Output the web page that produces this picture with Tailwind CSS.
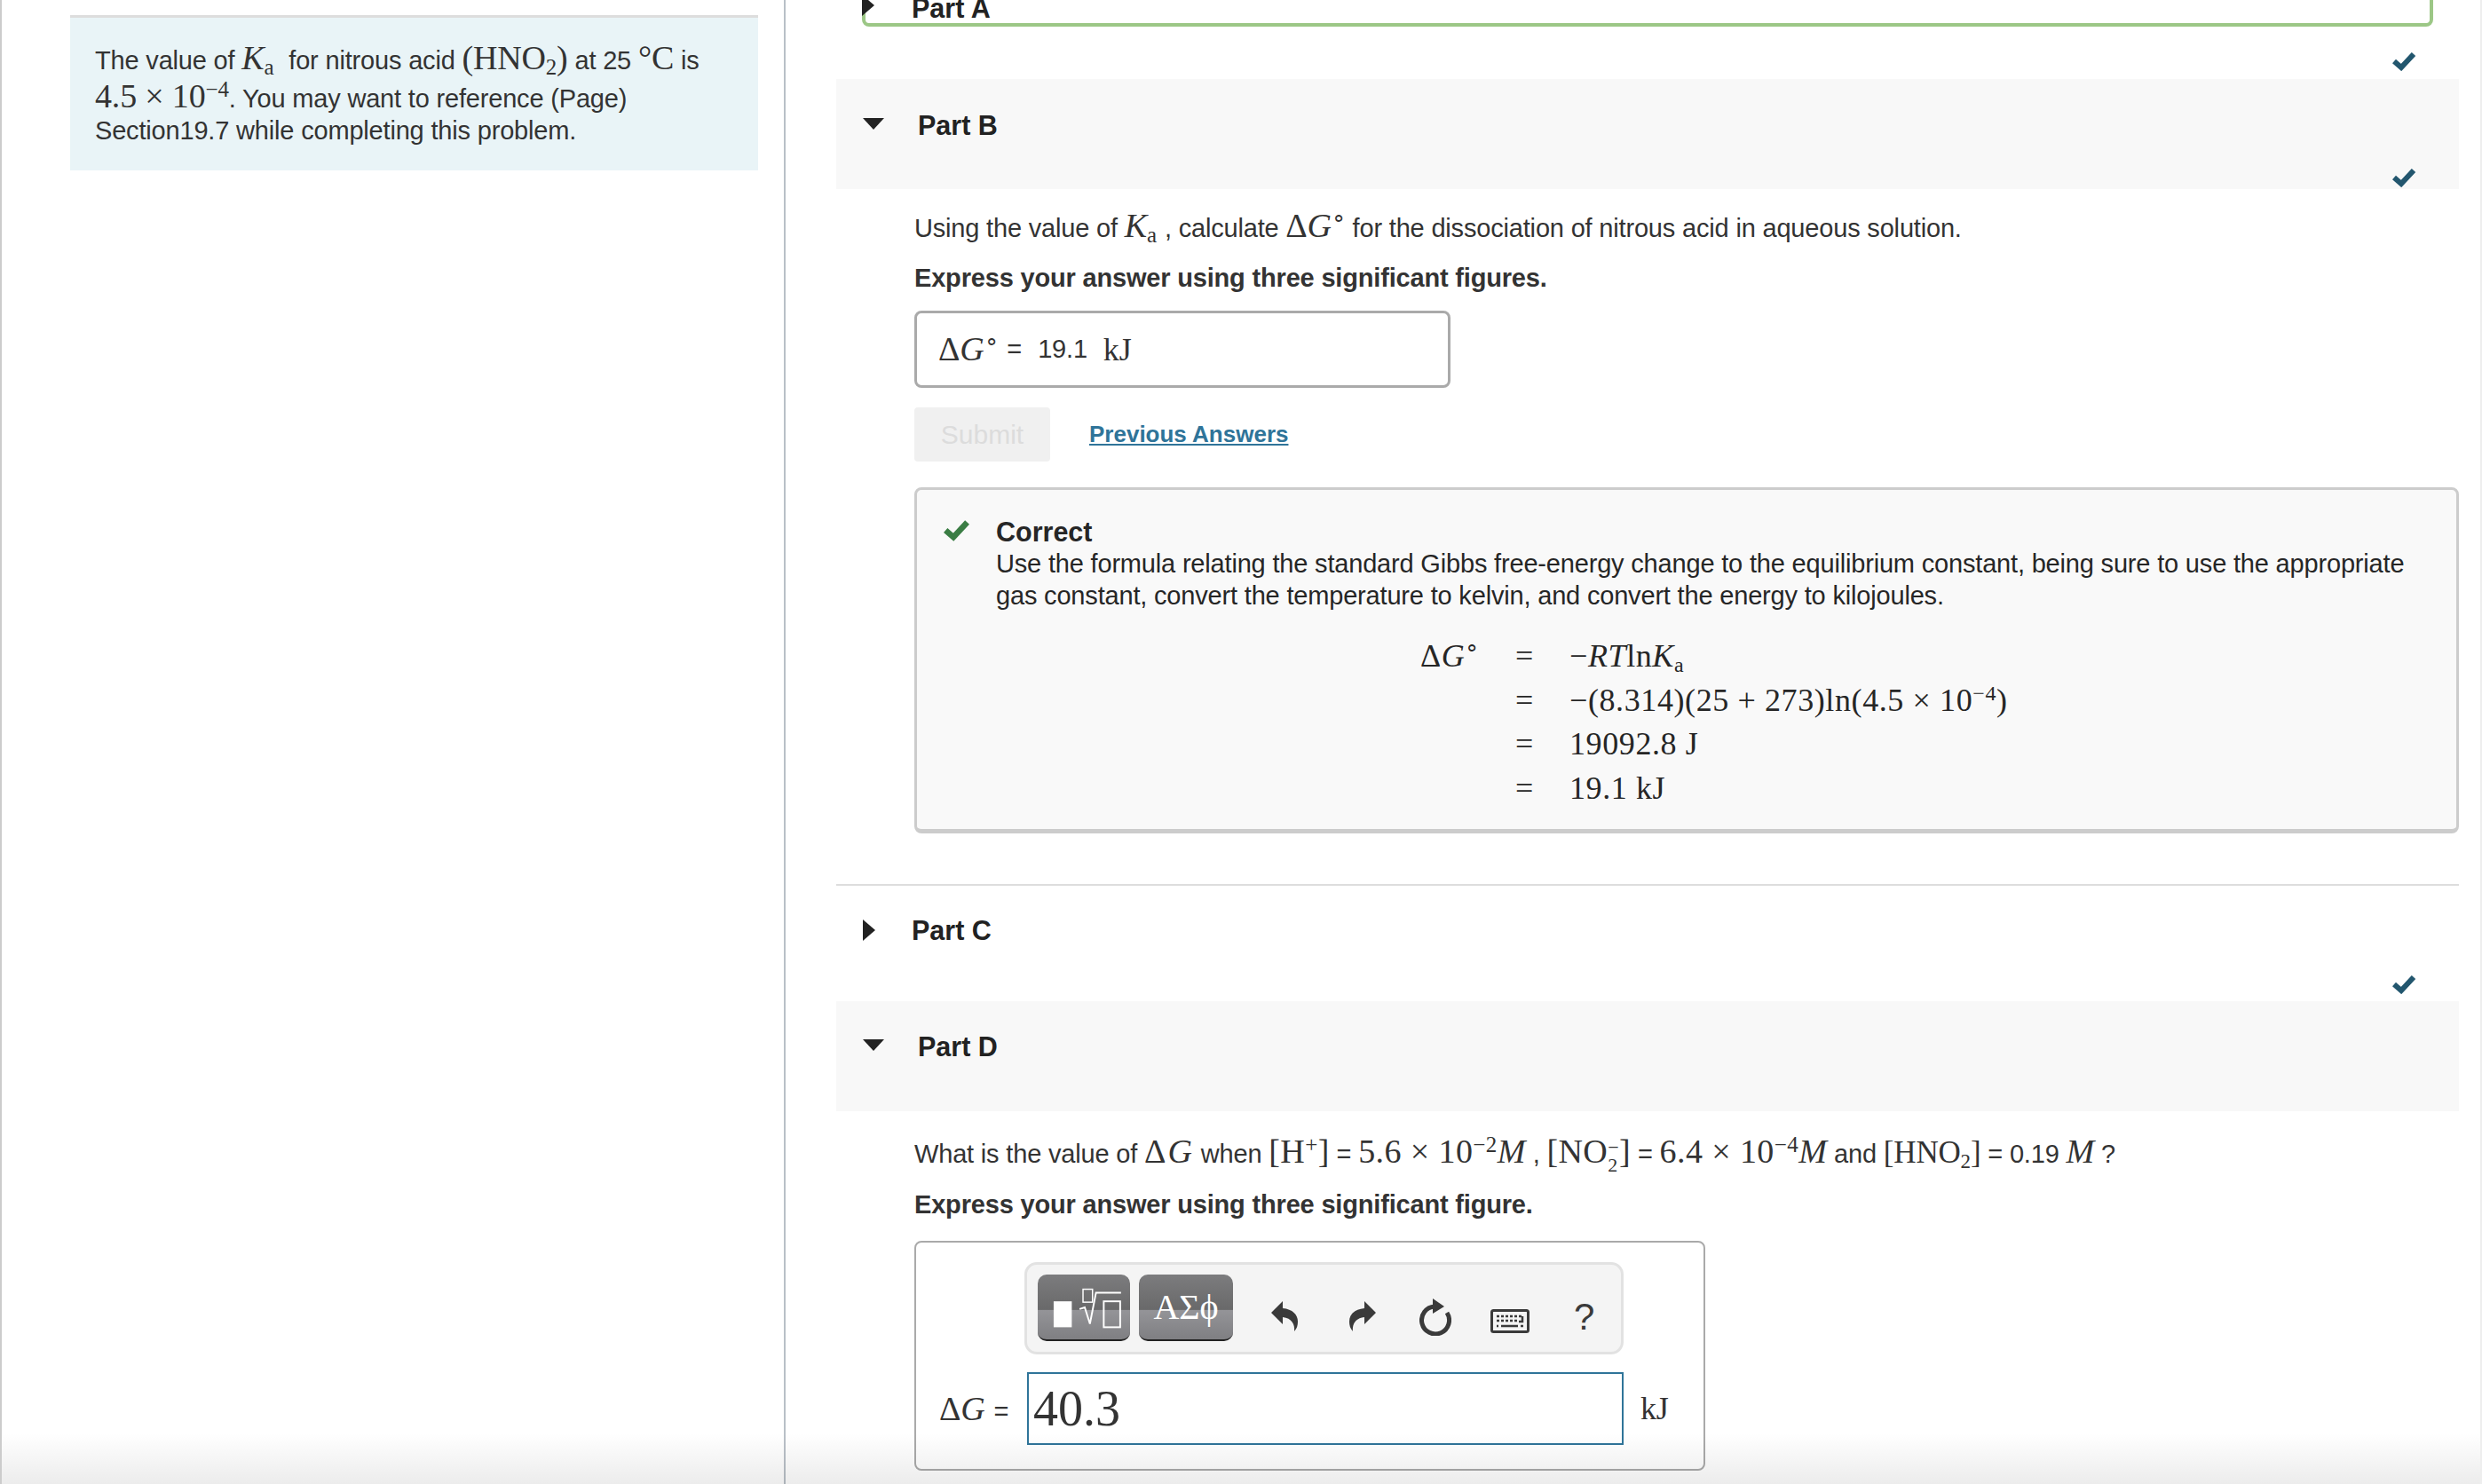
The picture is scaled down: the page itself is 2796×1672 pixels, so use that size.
<!doctype html>
<html lang="en">
<head>
<meta charset="utf-8">
<title>Part D</title>
<script src="https://cdn.jsdelivr.net/npm/@tailwindcss/browser@4"></script>
</head>
<body class="bg-white">
<div class="relative flex h-[1672px] w-[2796px] overflow-hidden border-r-2 border-l-2 border-r-[#eeeeee] border-l-[#cccccc] bg-white font-['Liberation_Sans',Arial,sans-serif] text-[29px] tracking-[-0.18px] text-[#333333]">

  <!-- left: intro panel -->
  <aside class="h-full w-[883px] shrink-0 border-r-2 border-[#b9c0c7] pt-[17px] pl-[77px]">
    <div class="h-[175px] w-[775px] border-t-[3px] border-[#dddddd] bg-[#e9f4f7] pt-[27px] pl-[28px] leading-[36px]">
      <p class="h-[43px] whitespace-nowrap">The value of <span class="mr-[9px] font-['Liberation_Serif',serif] text-[38px]"><i>K</i><sub class="text-[25px]">a</sub></span> for nitrous acid <span class="font-['Liberation_Serif',serif] text-[38px]">(HNO<sub class="text-[25px]">2</sub>)</span> at 25 <span class="font-['Liberation_Serif',serif] text-[38px]">°C</span> is</p>
      <p class="h-[39px] whitespace-nowrap"><span class="font-['Liberation_Serif',serif] text-[38px]">4.5 × 10<sup class="text-[25px]">−4</sup></span>. You may want to reference (Page)</p>
      <p class="whitespace-nowrap">Section19.7 while completing this problem.</p>
    </div>
  </aside>

  <!-- right: parts -->
  <main class="w-[1908px] shrink-0 pr-[23px] pl-[57px]">
    <div class="mt-[-40px] ml-[29px] flex h-[70px] w-[1770px] items-end rounded-b-lg border-4 border-[#9cc786] pb-[1px]">
      <svg class="mb-[7px] ml-[-4px] h-[24px] w-[14px]" viewBox="0 0 14 24"><path d="M0 0 L14 12 L0 24 Z" fill="#222222"/></svg>
      <span class="ml-[42px] text-[30.5px] leading-[32px] font-bold tracking-normal text-[#222222]">Part A</span>
    </div>

    <div class="mt-[29px] flex justify-end pr-[47px]">
      <svg class="h-[21px] w-[28px]" viewBox="0 0 28 21"><polyline points="2,10 10,17 24,2" fill="none" stroke="#22566e" stroke-width="6"/></svg>
    </div>

    <!-- Part B -->
    <div class="mt-[9px] flex h-[124px] bg-[#f8f8f8] pr-[47px]">
      <svg class="mt-[44px] ml-[30px] h-[13px] w-[24px]" viewBox="0 0 24 13"><path d="M0 0 H24 L12 13 Z" fill="#222222"/></svg>
      <span class="mt-[34px] ml-[38px] text-[30.5px] leading-[36px] font-bold tracking-normal text-[#222222]">Part B</span>
      <svg class="mt-auto mb-[2px] ml-auto h-[21px] w-[28px]" viewBox="0 0 28 21"><polyline points="2,10 10,17 24,2" fill="none" stroke="#22566e" stroke-width="6"/></svg>
    </div>

    <div class="pl-[88px]">
      <p class="mt-[21px] h-[40px] leading-[40px] whitespace-nowrap">Using the value of <span class="mr-[9px] font-['Liberation_Serif',serif] text-[38px]"><i>K</i><sub class="text-[25px]">a</sub></span>, calculate <span class="font-['Liberation_Serif',serif] text-[38px]">Δ<i>G</i><sup class="text-[26px]">∘</sup></span> for the dissociation of nitrous acid in aqueous solution.</p>
      <p class="mt-[21px] leading-[36px] font-bold">Express your answer using three significant figures.</p>

      <div class="mt-[19px] flex h-[87px] w-[604px] items-center rounded-lg border-[3px] border-[#aaaaaa] pl-[24px] whitespace-nowrap">
        <span class="font-['Liberation_Serif',serif] text-[38px]">Δ<i>G</i><sup class="text-[26px]">∘</sup></span>
        <span class="ml-[10px]">=</span>
        <span class="ml-[18px]">19.1</span>
        <span class="ml-[18px] font-['Liberation_Serif',serif] text-[36px]">kJ</span>
      </div>

      <div class="mt-[22px] flex items-center">
        <div class="flex h-[61px] w-[153px] items-center justify-center rounded-[4px] bg-[#f0f0f0] text-[30px] tracking-normal text-[#dcdcdc]">Submit</div>
        <a class="ml-[44px] text-[26px] font-bold tracking-normal text-[#2f7499] underline">Previous Answers</a>
      </div>

      <!-- feedback -->
      <div class="mt-[29px] flex h-[390px] w-[1740px] rounded-lg border-t-[3px] border-r-[3px] border-b-[5px] border-l-[3px] border-[#cccccc] bg-[#f9f9f9] pt-[29px] pl-[30px] text-[#262626]">
        <svg class="mt-[5px] h-[24px] w-[31px] shrink-0" viewBox="0 0 28 21"><polyline points="2,10 10,17 24,2" fill="none" stroke="#3a7d44" stroke-width="6"/></svg>
        <div class="ml-[28px] min-w-0 flex-1">
          <p class="text-[30.5px] leading-[36px] font-bold tracking-normal">Correct</p>
          <p class="leading-[36px] whitespace-nowrap">Use the formula relating the standard Gibbs free-energy change to the equilibrium constant, being sure to use the appropriate<br>gas constant, convert the temperature to kelvin, and convert the energy to kilojoules.</p>
          <div class="mt-[26px] ml-[478px] grid grid-cols-[66px_102px_auto] justify-start font-['Liberation_Serif',serif] text-[36px] leading-[49.5px] tracking-[0.6px]">
            <span class="whitespace-nowrap">Δ<i>G</i><sup class="text-[26px]">∘</sup></span><span class="pl-[41px]">=</span><span>−<i>RT</i>ln<i>K</i><sub class="text-[24px]">a</sub></span>
            <span></span><span class="pl-[41px]">=</span><span>−(8.314)(25 + 273)ln(4.5 × 10<sup class="text-[24px]">−4</sup>)</span>
            <span></span><span class="pl-[41px]">=</span><span>19092.8 J</span>
            <span></span><span class="pl-[41px]">=</span><span>19.1 kJ</span>
          </div>
        </div>
      </div>
    </div>

    <div class="mt-[57px] h-[2px] bg-[#dddddd]"></div>

    <!-- Part C -->
    <div class="mt-[38px] flex h-[24px] items-center">
      <svg class="ml-[30px] h-[24px] w-[14px]" viewBox="0 0 14 24"><path d="M0 0 L14 12 L0 24 Z" fill="#222222"/></svg>
      <span class="ml-[41px] text-[30.5px] leading-[36px] font-bold tracking-normal text-[#222222]">Part C</span>
    </div>
    <div class="mt-[39px] flex justify-end pr-[47px]">
      <svg class="h-[21px] w-[28px]" viewBox="0 0 28 21"><polyline points="2,10 10,17 24,2" fill="none" stroke="#22566e" stroke-width="6"/></svg>
    </div>

    <!-- Part D -->
    <div class="mt-[8px] flex h-[124px] bg-[#f8f8f8]">
      <svg class="mt-[43px] ml-[30px] h-[13px] w-[24px]" viewBox="0 0 24 13"><path d="M0 0 H24 L12 13 Z" fill="#222222"/></svg>
      <span class="mt-[33px] ml-[38px] text-[30.5px] leading-[36px] font-bold tracking-normal text-[#222222]">Part D</span>
    </div>

    <div class="pl-[88px]">
      <p class="mt-[23px] h-[44px] leading-[44px] whitespace-nowrap">What is the value of <span class="font-['Liberation_Serif',serif] text-[38px] tracking-[2px]">Δ<i>G</i></span> when <span class="font-['Liberation_Serif',serif] text-[38px] tracking-[0.4px]">[H<sup class="text-[25px]">+</sup>]</span> = <span class="font-['Liberation_Serif',serif] text-[38px] tracking-[0.4px]">5.6 × 10<sup class="text-[25px]">−2</sup><i>M</i></span> , <span class="font-['Liberation_Serif',serif] text-[38px] tracking-[0.4px]">[NO<span class="inline-flex flex-col align-[10px] text-[22px] leading-[20px]"><span>−</span><span>2</span></span>]</span> = <span class="font-['Liberation_Serif',serif] text-[38px] tracking-[0.4px]">6.4 × 10<sup class="text-[25px]">−4</sup><i>M</i></span> and <span class="font-['Liberation_Serif',serif] text-[35px]">[HNO<sub class="text-[23px]">2</sub>]</span> = 0.19 <span class="font-['Liberation_Serif',serif] text-[38px]"><i>M</i></span> ?</p>
      <p class="mt-[20px] leading-[36px] font-bold">Express your answer using three significant figure.</p>

      <div class="mt-[23px] h-[259px] w-[891px] rounded-lg border-2 border-[#aaaaaa] pt-[22px] pl-[122px]">
        <!-- math palette -->
        <div class="flex h-[104px] w-[675px] items-start rounded-[14px] border-[3px] border-[#e2e2e2] bg-[#f4f4f4] pt-[11px] pl-[12px]">
          <div class="relative h-[75px] w-[104px] overflow-hidden rounded-[10px] border-b-2 border-[#222222] bg-[linear-gradient(#7c7c7e_0%,#69696a_54%,#949498_55%,#7f7f82_100%)]">
            <svg class="h-full w-full" viewBox="0 0 104 75" fill="none" stroke="#ffffff">
              <rect x="17" y="31" width="21" height="30" fill="#ffffff" stroke="none"/>
              <rect x="51" y="17" width="11" height="15" stroke-width="1.5"/>
              <path d="M47 40 L53 38 L59 57 L66 21 H95" stroke-width="2"/>
              <rect x="75" y="31" width="19" height="30" stroke-width="2"/>
            </svg>
          </div>
          <div class="ml-[10px] flex h-[75px] w-[106px] items-center justify-center rounded-[10px] border-b-2 border-[#222222] bg-[linear-gradient(#7c7c7e_0%,#69696a_54%,#949498_55%,#7f7f82_100%)] font-['Liberation_Serif',serif] text-[40px] tracking-normal text-white">ΑΣϕ</div>

          <svg class="mt-[30px] ml-[43px] h-[34px] w-[30px]" viewBox="0 0 30 34"><path d="M0 13 L13 0 V8 C24 9 30 15 30 23 C30 27 29 31 26 34 C27 26 23 19 13 18 V26 Z" fill="#3a3a3a"/></svg>
          <svg class="mt-[30px] ml-[58px] h-[34px] w-[30px]" viewBox="0 0 30 34"><path d="M30 13 L17 0 V8 C6 9 0 15 0 23 C0 27 1 31 4 34 C3 26 7 19 17 18 V26 Z" fill="#3a3a3a"/></svg>
          <svg class="mt-[27px] ml-[49px] h-[42px] w-[36px]" viewBox="0 0 36 42" fill="none"><path d="M31 16 A15.5 15.5 0 1 1 17 9" stroke="#3a3a3a" stroke-width="5"/><path d="M15 0 L28 9 L15 17 Z" fill="#3a3a3a"/></svg>
          <svg class="mt-[39px] ml-[44px] h-[27px] w-[44px]" viewBox="0 0 44 27" fill="none"><rect x="1.5" y="1.5" width="41" height="24" rx="2" stroke="#3a3a3a" stroke-width="3"/><path d="M7 8 H36 M7 13 H32 M7 19 H9 M34 19 H37" stroke="#3a3a3a" stroke-width="2.5" stroke-dasharray="3 2"/><path d="M12 19 H31 M36 8 V14 H32" stroke="#3a3a3a" stroke-width="2.5"/></svg>
          <span class="mt-[24px] ml-[50px] text-[42px] leading-[48px] font-light tracking-normal text-[#3a3a3a]">?</span>
        </div>

        <div class="mt-[20px] ml-[-96px] flex items-center">
          <span class="flex w-[99px] items-baseline"><span class="font-['Liberation_Serif',serif] text-[38px]">Δ<i>G</i></span><span class="ml-[10px]">=</span></span>
          <div class="flex h-[82px] w-[672px] items-center border-2 border-[#2f7499] pl-[5px] font-['Liberation_Serif',serif] text-[56px] tracking-normal text-[#333333]">40.3</div>
          <span class="ml-[19px] font-['Liberation_Serif',serif] text-[36px]">kJ</span>
        </div>
      </div>
    </div>
  </main>

  <!-- window fade at the bottom edge -->
  <div class="pointer-events-none absolute inset-x-0 bottom-0 h-[57px] bg-linear-to-t from-black/[0.075] to-transparent"></div>
</div>
</body>
</html>
